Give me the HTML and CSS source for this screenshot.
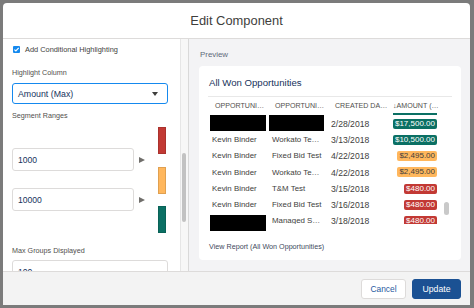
FILE: index.html
```html
<!DOCTYPE html>
<html>
<head>
<meta charset="utf-8">
<link rel="stylesheet" href="styles.css">
</head>
<body>
<div class="modal">
  <header class="modal-header"><h1>Edit Component</h1></header>
  <div class="modal-body">
    <div class="left">
      <label class="check"><span class="cb"><svg width="7" height="7" viewBox="0 0 7 7"><path d="M1.4 3.6 L2.9 5 L5.7 1.9" fill="none" stroke="#fff" stroke-width="1.2"/></svg></span>Add Conditional Highlighting</label>
      <div class="field-label first">Highlight Column</div>
      <div class="select"><span>Amount (Max)</span><span class="caret"></span></div>
      <div class="field-label">Segment Ranges</div>
      <div class="segments">
        <div class="seg-inputs">
          <div class="seg-row"><div class="input">1000</div><span class="arrow"></span></div>
          <div class="seg-row"><div class="input">10000</div><span class="arrow"></span></div>
        </div>
        <div class="swatches">
          <span class="swatch red"></span>
          <span class="swatch orange"></span>
          <span class="swatch teal"></span>
        </div>
      </div>
      <div class="field-label groups">Max Groups Displayed</div>
      <div class="input wide">100</div>
    </div>
    <div class="scrolltrack"><div class="thumb"></div></div>
    <div class="right">
      <div class="preview-label">Preview</div>
      <div class="card">
        <div class="card-title">All Won Opportunities</div>
        <div class="table">
          <div class="thead">
            <div class="th">OPPORTUNI…</div>
            <div class="th">OPPORTUNI…</div>
            <div class="th">CREATED DA…</div>
            <div class="th sorted">↓AMOUNT (…</div>
            <div class="th"></div>
          </div>
          <div class="tbody-wrap">
            <div class="tbody">
              <div class="tr"><div class="td"><span class="redact r1"></span></div><div class="td"><span class="redact r2"></span></div><div class="td date">2/28/2018</div><div class="td amt"><span class="badge teal">$17,500.00</span></div></div>
              <div class="tr"><div class="td">Kevin Binder</div><div class="td">Workato Te…</div><div class="td date">3/13/2018</div><div class="td amt"><span class="badge teal">$10,500.00</span></div></div>
              <div class="tr"><div class="td">Kevin Binder</div><div class="td">Fixed Bid Test</div><div class="td date">4/22/2018</div><div class="td amt"><span class="badge orange">$2,495.00</span></div></div>
              <div class="tr"><div class="td">Kevin Binder</div><div class="td">Workato Te…</div><div class="td date">4/22/2018</div><div class="td amt"><span class="badge orange">$2,495.00</span></div></div>
              <div class="tr"><div class="td">Kevin Binder</div><div class="td">T&amp;M Test</div><div class="td date">3/15/2018</div><div class="td amt"><span class="badge red">$480.00</span></div></div>
              <div class="tr"><div class="td">Kevin Binder</div><div class="td">Fixed Bid Test</div><div class="td date">3/16/2018</div><div class="td amt"><span class="badge red">$480.00</span></div></div>
              <div class="tr"><div class="td"><span class="redact r1 r7"></span></div><div class="td">Managed S…</div><div class="td date">3/18/2018</div><div class="td amt"><span class="badge red">$480.00</span></div></div>
            </div>
            <div class="vscroll"><div class="vthumb"></div></div>
          </div>
        </div>
        <div class="view-report">View Report (All Won Opportunities)</div>
      </div>
    </div>
  </div>
  <footer class="modal-footer">
    <button class="btn cancel">Cancel</button>
    <button class="btn update">Update</button>
  </footer>
</div>
</body>
</html>
```

FILE: styles.css
```css
* { box-sizing: border-box; margin: 0; padding: 0; }
html, body { height: 100%; }
body {
  background: #7b7b7b;
  font-family: "Liberation Sans", Arial, sans-serif;
  padding: 3px 4px 3px 3px;
  overflow: hidden;
}
.modal {
  width: 467px;
  height: 302px;
  background: #fff;
  border-radius: 4px 4px 0 0;
  display: flex;
  flex-direction: column;
  overflow: hidden;
}
.modal-header {
  height: 36px;
  flex: none;
  border-bottom: 1px solid #dddbda;
  display: flex;
  align-items: center;
  justify-content: center;
}
.modal-header h1 {
  font-size: 12.9px;
  font-weight: 400;
  color: #3e3e3c;
}
.modal-body {
  display: flex;
  height: 232px;
  flex: none;
}
.left {
  width: 177px;
  flex: none;
  padding: 6px 0 0 9px;
  overflow: hidden;
}
.check {
  display: flex;
  align-items: center;
  height: 9px;
  font-size: 7.4px;
  color: #3e3e3c;
}
.cb {
  width: 7px;
  height: 7px;
  margin-left: 1px;
  margin-right: 5px;
  background: #1589ee;
  border-radius: 1px;
  display: flex;
}
.field-label {
  font-size: 7.2px;
  line-height: 9px;
  color: #514f4d;
  margin-top: 6.5px;
}
.field-label.first { margin-top: 13.5px; }
.field-label.groups { margin-top: 12.5px; }
.select {
  margin-top: 6.5px;
  width: 156px;
  height: 21px;
  border: 1px solid #1589ee;
  border-radius: 3px;
  display: flex;
  align-items: center;
  justify-content: space-between;
  padding: 0 9px 0 5px;
  font-size: 8.8px;
  color: #16325c;
}
.caret {
  width: 0;
  height: 0;
  border-left: 3.5px solid transparent;
  border-right: 3.5px solid transparent;
  border-top: 4px solid #3e3e3c;
}
.segments {
  display: flex;
  margin-top: 7.5px;
}
.seg-inputs {
  padding-top: 21px;
  display: flex;
  flex-direction: column;
  gap: 17px;
}
.seg-row {
  display: flex;
  align-items: center;
}
.input {
  width: 122px;
  height: 23px;
  border: 1px solid #dddbda;
  border-radius: 3px;
  padding-left: 5px;
  display: flex;
  align-items: center;
  font-size: 8.6px;
  color: #16325c;
}
.input.wide { width: 156px; margin-top: 5.5px; }
.arrow {
  width: 0;
  height: 0;
  margin-left: 5px;
  border-top: 3.5px solid transparent;
  border-bottom: 3.5px solid transparent;
  border-left: 6px solid #706e6b;
}
.swatches {
  margin-left: 13px;
  display: flex;
  flex-direction: column;
  gap: 12.5px;
}
.swatch {
  display: block;
  width: 8px;
  height: 27px;
  border: 1px solid rgba(0, 0, 0, 0.12);
}
.swatch.red { background: #c23934; }
.swatch.orange { background: #ffb75d; border-color: #e0a050; }
.swatch.teal { background: #0b7064; }
.scrolltrack {
  width: 9px;
  flex: none;
  background: #f7f7f7;
  border-left: 1px solid #e6e6e6;
  border-right: 1px solid #d9d9d9;
  padding-top: 114px;
}
.thumb {
  width: 4px;
  height: 69px;
  margin-left: 1px;
  background: #c2c2c2;
  border-radius: 2px;
}
.right {
  flex: 1;
  background: #f3f3f5;
  padding: 11px 9px 0 10px;
}
.preview-label {
  font-size: 7.9px;
  line-height: 10px;
  color: #5e6a7a;
  margin-left: 1px;
}
.card {
  position: relative;
  margin-top: 6px;
  height: 194px;
  background: #fff;
  border-radius: 4px;
  padding: 11px 0 0 9px;
}
.card-title {
  font-size: 9.6px;
  line-height: 12px;
  color: #16325c;
  padding-left: 1px;
}
.table {
  margin-top: 7px;
  width: 244px;
}
.thead {
  display: grid;
  grid-template-columns: 60px 60px 61px 51px 12px;
  height: 20px;
  border-top: 1px solid #e8e8e8;
}
.th {
  font-size: 7.1px;
  line-height: 18px;
  color: #514f4d;
  white-space: nowrap;
  padding-left: 7px;
}
.th.sorted {
  padding-left: 0;
  margin: 0 3px 0 4px;
  border-bottom: 2px solid #0b7064;
  height: 18px;
}
.tbody-wrap {
  display: flex;
  height: 108px;
  overflow: hidden;
}
.tbody { width: 232px; flex: none; }
.tr {
  display: grid;
  grid-template-columns: 60px 60px 61px 51px;
  height: 16.2px;
}
.td {
  font-size: 7.9px;
  line-height: 16.2px;
  color: #3e3e3c;
  white-space: nowrap;
  padding-left: 4px;
}
.td:first-child { padding-left: 4px; }
.td.date { padding-left: 3px; font-size: 8.6px; }
.td.amt { padding: 0 3px 0 0; text-align: right; }
.redact {
  position: absolute;
  height: 16px;
  background: #000;
}
.redact.r1 { width: 56px; margin-left: -2px; margin-top: -1px; }
.redact.r2 { width: 55px; margin-left: -3px; margin-top: -1px; }
.redact.r7 { margin-top: 1.5px; }
.badge {
  display: inline-block;
  font-size: 8px;
  line-height: 10px;
  padding: 0 2px;
  border-radius: 2px;
  vertical-align: middle;
}
.badge.teal { background: #0b7064; color: #fff; }
.badge.orange { background: #ffb75d; color: #3e3e3c; }
.badge.red { background: #c23934; color: #fff; }
.vscroll { width: 12px; flex: none; }
.vthumb {
  width: 5px;
  height: 13px;
  margin: 86px 0 0 4px;
  background: #c9c9c9;
  border-radius: 3px;
}
.view-report {
  margin-top: 17.5px;
  font-size: 7.2px;
  line-height: 9px;
  color: #3e4a5c;
  padding-left: 1px;
}
.modal-footer {
  flex: none;
  height: 34px;
  border-top: 1px solid #dddbda;
  background: #f3f3f3;
  display: flex;
  justify-content: flex-end;
  align-items: flex-start;
  gap: 6px;
  padding: 7px 9px 0 0;
}
.btn {
  height: 20px;
  border-radius: 3px;
  font-family: "Liberation Sans", Arial, sans-serif;
  cursor: pointer;
}
.btn.cancel {
  width: 45px;
  background: #fff;
  border: 1px solid #dddbda;
  color: #1f5aa0;
  font-size: 8.4px;
}
.btn.update {
  width: 49px;
  background: #1b5193;
  border: 1px solid #1b5193;
  color: #fff;
  font-size: 8.7px;
}
```
